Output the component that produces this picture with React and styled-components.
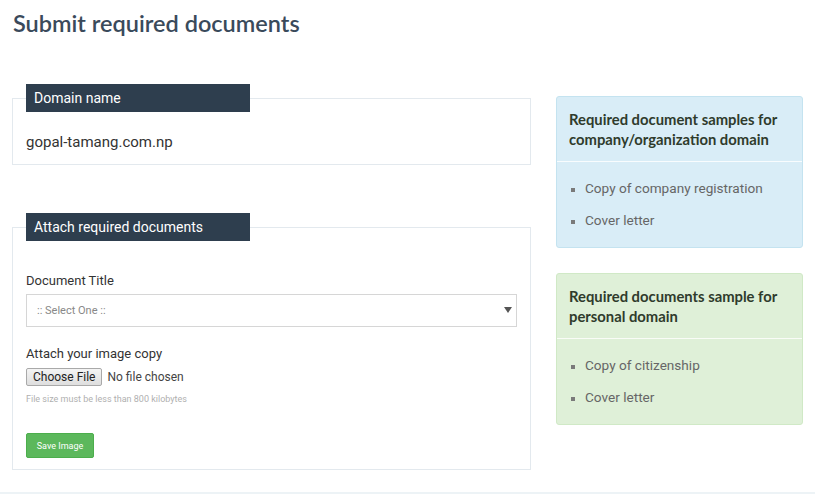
import React from 'react';
import styled, { createGlobalStyle } from 'styled-components';

const GlobalStyle = createGlobalStyle`
    html, body {
        margin: 0;
        padding: 0;
        background: #ffffff;
        font-family: Roboto, "Liberation Sans", Arial, sans-serif;
        color: #333333;
    }
    * {
        box-sizing: border-box;
    }
`;

export default function App() {
    return (
        <>
            <GlobalStyle />
            <Page>
                <PageTitle>Submit required documents</PageTitle>

                <Layout>
                    <MainColumn>
                        <Panel>
                            <PanelLegend>Domain name</PanelLegend>
                            <DomainName>gopal-tamang.com.np</DomainName>
                        </Panel>

                        <Panel $spaced>
                            <PanelLegend>Attach required documents</PanelLegend>
                            <Form onSubmit={(e) => e.preventDefault()}>
                                <FieldLabel htmlFor="doc-title">Document Title</FieldLabel>
                                <SelectWrap>
                                    <Select id="doc-title" defaultValue="">
                                        <option value="">:: Select One ::</option>
                                        <option value="reg">Company registration</option>
                                        <option value="cit">Citizenship</option>
                                        <option value="cover">Cover letter</option>
                                    </Select>
                                    <SelectArrow width="8" height="6" viewBox="0 0 8 6">
                                        <path d="M0 0h8L4 6z" fill="#555" />
                                    </SelectArrow>
                                </SelectWrap>

                                <FieldLabel $top htmlFor="doc-file">Attach your image copy</FieldLabel>
                                <FileInput id="doc-file" type="file" accept="image/*" />
                                <HelpText>File size must be less than 800 kilobytes</HelpText>

                                <SaveButton type="submit">Save Image</SaveButton>
                            </Form>
                        </Panel>
                    </MainColumn>

                    <SideColumn>
                        <InfoBox $variant="info">
                            <InfoHeading>Required document samples for company/organization domain</InfoHeading>
                            <InfoList>
                                <li>Copy of company registration</li>
                                <li>Cover letter</li>
                            </InfoList>
                        </InfoBox>

                        <InfoBox $variant="success">
                            <InfoHeading>Required documents sample for personal domain</InfoHeading>
                            <InfoList>
                                <li>Copy of citizenship</li>
                                <li>Cover letter</li>
                            </InfoList>
                        </InfoBox>
                    </SideColumn>
                </Layout>

                <Footer />
            </Page>
        </>
    );
}

/* Styled Components */
const boxColors = {
    info: { bg: '#d9edf7', border: '#c4e3f0' },
    success: { bg: '#dff0d8', border: '#d0e9c6' },
};

const Page = styled.div`
    width: 815px;
    min-height: 496px;
    padding: 8px 0 0;
`;

const PageTitle = styled.h1`
    margin: 0 0 0 13px;
    font-family: Lato, "Open Sans", sans-serif;
    font-size: 23.5px;
    font-weight: 600;
    line-height: 30px;
    color: #3a4a5b;
`;

const Layout = styled.div`
    display: grid;
    grid-template-columns: 519px 247px;
    column-gap: 25px;
    padding-left: 12px;
    margin-top: 46px;
`;

const MainColumn = styled.div`
    display: flex;
    flex-direction: column;
`;

const Panel = styled.fieldset`
    margin: ${(p) => (p.$spaced ? '48px' : '0')} 0 0;
    padding: 0 13px ${(p) => (p.$spaced ? '11px' : '12px')};
    border: 1px solid #e3e9ee;
    border-radius: 0;
    min-width: 0;
`;

const PanelLegend = styled.legend`
    width: 224px;
    height: 28px;
    margin: 0;
    padding: 0 8px;
    background: #2e3e4e;
    color: #ffffff;
    font-size: 14px;
    line-height: 28px;
`;

const DomainName = styled.div`
    margin-top: 20px;
    font-size: 15px;
    line-height: 20px;
    color: #333333;
`;

const Form = styled.form`
    display: flex;
    flex-direction: column;
    align-items: flex-start;
    padding-top: 31px;
`;

const FieldLabel = styled.label`
    margin-top: ${(p) => (p.$top ? '18px' : '0')};
    font-size: 13px;
    line-height: 18px;
    color: #333333;
`;

const SelectWrap = styled.div`
    position: relative;
    width: 100%;
    margin-top: 4px;
`;

const Select = styled.select`
    display: block;
    width: 100%;
    height: 33px;
    padding: 0 10px;
    appearance: none;
    background: #ffffff;
    border: 1px solid #d6d6d6;
    border-radius: 0;
    font-family: Roboto, sans-serif;
    font-size: 11px;
    color: #888888;
    outline: none;
`;

const SelectArrow = styled.svg`
    position: absolute;
    right: 5px;
    top: 13px;
    pointer-events: none;
`;

const FileInput = styled.input`
    margin-top: 5px;
    font-family: Roboto, sans-serif;
    font-size: 12px;
    color: #444444;

    &::file-selector-button {
        height: 18px;
        margin-right: 5px;
        padding: 0 6px;
        background: linear-gradient(#f4f4f4, #dedede);
        border: 1px solid #a9a9a9;
        border-radius: 2px;
        font-family: Roboto, sans-serif;
        font-size: 12px;
        color: #222222;
    }
`;

const HelpText = styled.div`
    margin-top: 7px;
    font-size: 9px;
    line-height: 12px;
    color: #b0b0b0;
`;

const SaveButton = styled.button`
    margin-top: 28px;
    width: 68px;
    height: 25px;
    padding: 0;
    background: #5cb85c;
    border: 1px solid #4cae4c;
    border-radius: 2px;
    color: #ffffff;
    font-family: Roboto, sans-serif;
    font-size: 9px;
    cursor: pointer;
`;

const SideColumn = styled.div`
    display: flex;
    flex-direction: column;
    gap: 25px;
    padding-top: 12px;
`;

const InfoBox = styled.div`
    background: ${(p) => boxColors[p.$variant].bg};
    border: 1px solid ${(p) => boxColors[p.$variant].border};
    border-radius: 3px;
`;

const InfoHeading = styled.div`
    padding: 12px 12px 12px 12px;
    border-bottom: 1px solid rgba(255, 255, 255, 0.8);
    font-family: Lato, "Open Sans", sans-serif;
    font-size: 14.8px;
    font-weight: 700;
    line-height: 20px;
    color: #2f3b2c;
`;

const InfoList = styled.ul`
    margin: 0;
    padding: 17px 12px 18px 28px;
    list-style: square;
    font-size: 13.6px;
    line-height: 18px;
    color: #666666;

    li {
        margin-bottom: 14px;
    }

    li:last-child {
        margin-bottom: 0;
    }

    li::marker {
        font-size: 12px;
        color: #7a7a7a;
    }
`;

const Footer = styled.div`
    margin-top: 22px;
    border-top: 2px solid #edf3f6;
    height: 3px;
`;
